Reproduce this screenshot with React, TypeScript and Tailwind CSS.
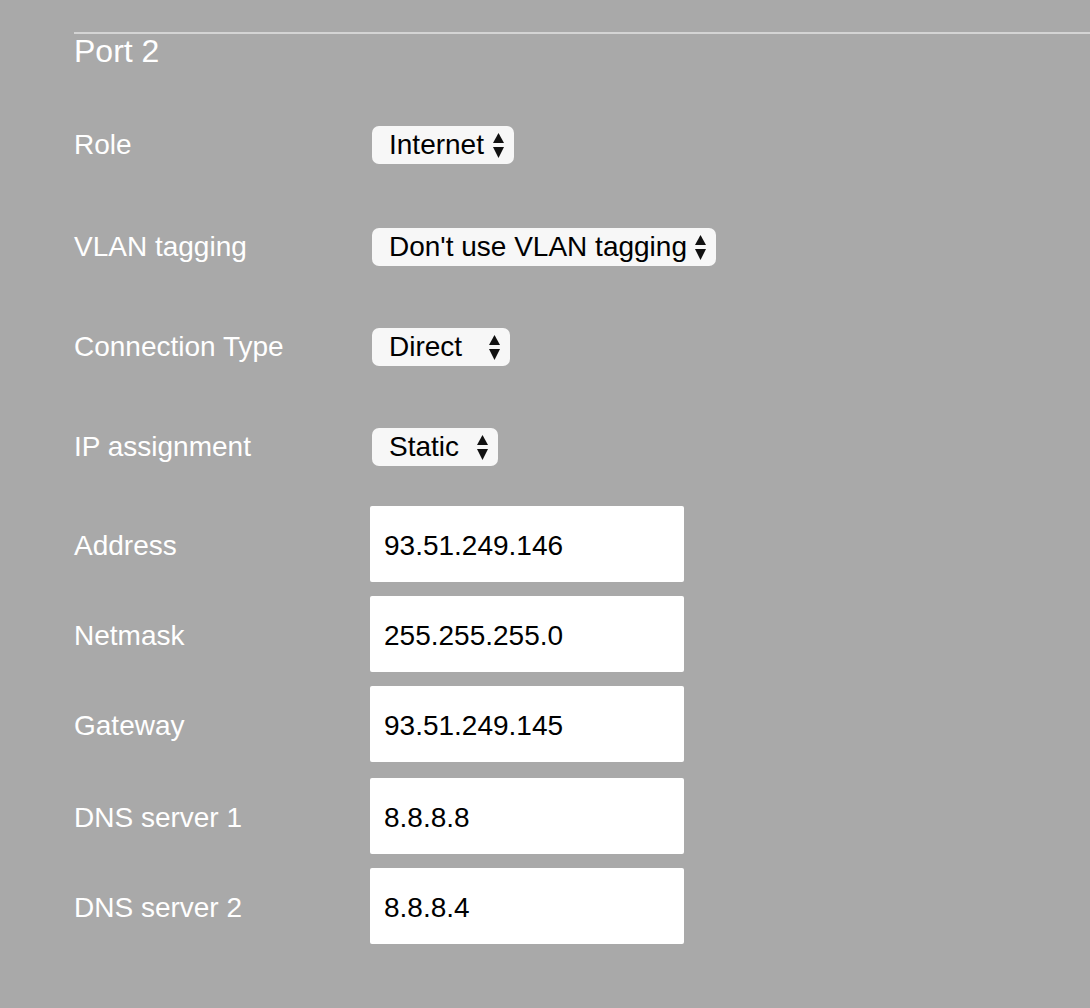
import React from "react";

function Arrows() {
  return (
    <svg width="11" height="25" viewBox="0 0 11 25" className="shrink-0">
      <polygon points="5.5,0 11,10 0,10" fill="#111" />
      <polygon points="0,14 11,14 5.5,25" fill="#111" />
    </svg>
  );
}

function Select({ value, width }: { value: string; width: string }) {
  return (
    <div
      className={`ml-[2px] h-[38px] ${width} rounded-[7px] bg-[#f7f7f7] flex items-center justify-between pl-[17px] pr-[10px] text-[28px] text-black leading-none`}
    >
      <span>{value}</span>
      <Arrows />
    </div>
  );
}

function Field({ value }: { value: string }) {
  return (
    <div className="h-[76px] w-[314px] rounded-[2px] bg-white flex items-center pl-[14px] pt-[3px] text-[28px] text-black leading-none">
      {value}
    </div>
  );
}

function Row({
  label,
  children,
  className,
  labelClass = "",
}: {
  label: string;
  children: React.ReactNode;
  className: string;
  labelClass?: string;
}) {
  return (
    <div className={`flex items-center ${className}`}>
      <div className={`w-[296px] shrink-0 text-[28px] text-white leading-none ${labelClass}`}>{label}</div>
      {children}
    </div>
  );
}

export default function App() {
  return (
    <div
      className="min-h-[1008px] w-full bg-[#a9a9a9] pl-[74px] pt-[32px] overflow-hidden"
      style={{ fontFamily: '"Liberation Sans", Arial, Helvetica, sans-serif' }}
    >
      <div className="h-[2px] bg-[#d4d4d4]" />
      <div className="text-[32px] leading-[34px] text-white">Port 2</div>

      <Row label="Role" className="mt-[58px]">
        <Select value="Internet" width="w-[142px]" />
      </Row>
      <Row label="VLAN tagging" className="mt-[64px]">
        <Select value="Don't use VLAN tagging" width="w-[344px]" />
      </Row>
      <Row label="Connection Type" className="mt-[62px]">
        <Select value="Direct" width="w-[138px]" />
      </Row>
      <Row label="IP assignment" className="mt-[62px]">
        <Select value="Static" width="w-[126px]" />
      </Row>

      <Row label="Address" className="mt-[40px]" labelClass="pt-[3px]">
        <Field value="93.51.249.146" />
      </Row>
      <Row label="Netmask" className="mt-[14px]" labelClass="pt-[3px]">
        <Field value="255.255.255.0" />
      </Row>
      <Row label="Gateway" className="mt-[14px]" labelClass="pt-[3px]">
        <Field value="93.51.249.145" />
      </Row>
      <Row label="DNS server 1" className="mt-[16px]" labelClass="pt-[3px]">
        <Field value="8.8.8.8" />
      </Row>
      <Row label="DNS server 2" className="mt-[14px]" labelClass="pt-[3px]">
        <Field value="8.8.8.4" />
      </Row>
    </div>
  );
}
